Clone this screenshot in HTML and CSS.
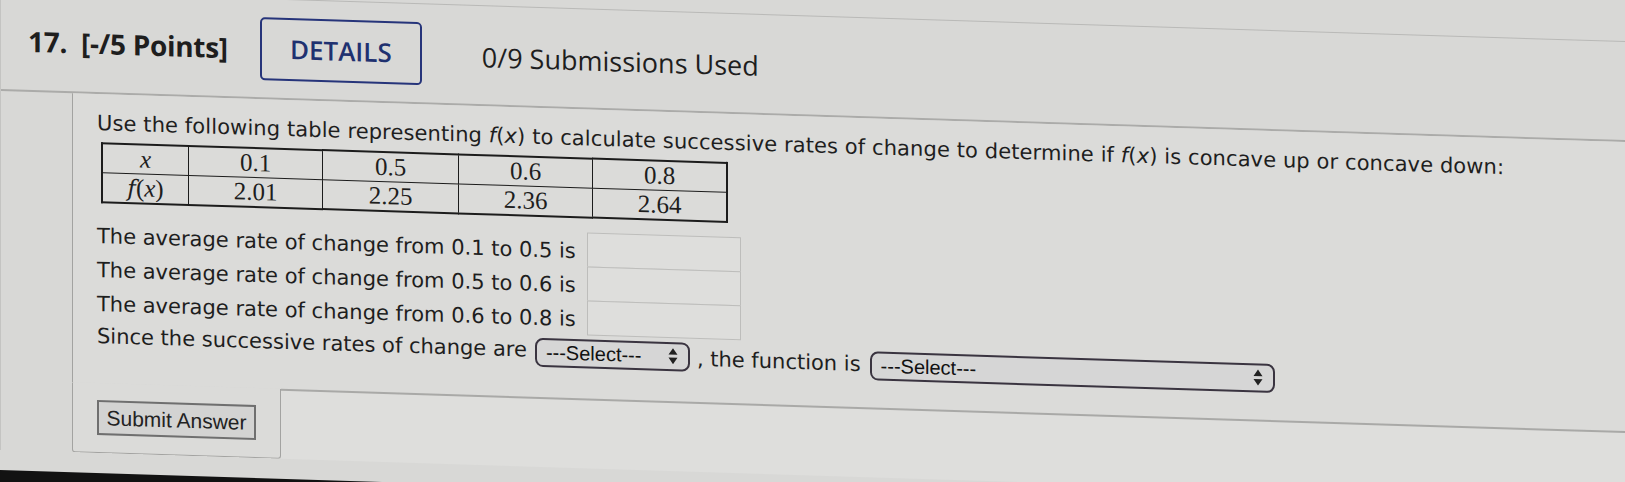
FILE: index.html
```html
<!DOCTYPE html>
<html lang="en">
<head>
<meta charset="utf-8">
<title>Question 17</title>
<link rel="stylesheet" href="styles.css">
</head>
<body>
<div class="frame">
<div class="page">
  <div class="question">
    <div class="header">
      <span class="qnum">17.&nbsp; [-/5 Points]</span>
      <span class="details">DETAILS</span>
      <span class="subs">0/9 Submissions Used</span>
    </div>
    <div class="content">
      <p class="intro">Use the following table representing <i class="fx">f</i>(<i class="fx">x</i>) to calculate successive rates of change to determine if <i class="fx">f</i>(<i class="fx">x</i>) is concave up or concave down:</p>
      <table class="data">
        <tr><td class="c0"><i>x</i></td><td>0.1</td><td class="w">0.5</td><td>0.6</td><td>0.8</td></tr>
        <tr><td class="c0"><i class="script">f</i>(<i>x</i>)</td><td>2.01</td><td class="w">2.25</td><td>2.36</td><td>2.64</td></tr>
      </table>
      <div class="answers">
        <div class="arow"><span class="label">The average rate of change from 0.1 to 0.5 is</span><span class="box"></span></div>
        <div class="arow"><span class="label">The average rate of change from 0.5 to 0.6 is</span><span class="box"></span></div>
        <div class="arow"><span class="label">The average rate of change from 0.6 to 0.8 is</span><span class="box"></span></div>
        <div class="srow">
          <span class="label">Since the successive rates of change are</span>
          <span class="select s1"><span class="stext">---Select---</span><svg class="arr" width="10" height="18" viewBox="0 0 10 18"><path d="M5 1 L9.5 7.5 L0.5 7.5 Z M5 17 L9.5 10.5 L0.5 10.5 Z" fill="#222"/></svg></span>
          <span class="label comma">, the function is</span>
          <span class="select s2"><span class="stext">---Select---</span><svg class="arr" width="10" height="18" viewBox="0 0 10 18"><path d="M5 1 L9.5 7.5 L0.5 7.5 Z M5 17 L9.5 10.5 L0.5 10.5 Z" fill="#222"/></svg></span>
        </div>
      </div>
    </div>
    <div class="footer">
      <div class="submit-box"><span class="submit">Submit Answer</span></div>
      <div class="filler"></div>
    </div>
  </div>
  <div class="bezel"></div>
</div>
</div>
</body>
</html>
```

FILE: styles.css
```css
html, body {
  margin: 0;
  padding: 0;
  overflow: hidden;
}
body {
  background: #d8d8d6;
  color: #1e1e1e;
}
.frame {
  width: 1625px;
  height: 482px;
  overflow: hidden;
}
.page {
  transform: skewY(1.8deg);
  transform-origin: 0 0;
  width: 1625px;
}
.question {
  margin-top: -10px;
  border-top: 1px solid #b9b9b7;
  border-left: 1px solid #c4c4c2;
}
.header {
  height: 98px;
  display: flex;
  align-items: center;
  padding-left: 27px;
  border-bottom: 2px solid #ababa9;
  font-family: "Open Sans", sans-serif;
}
.qnum {
  font-weight: 700;
  font-size: 28px;
  letter-spacing: -0.3px;
}
.details {
  margin-left: 32px;
  width: 158px;
  height: 59px;
  border: 2px solid #26347a;
  border-radius: 5px;
  display: flex;
  align-items: center;
  justify-content: center;
  color: #1f3170;
  font-size: 26px;
  font-weight: 600;
}
.subs {
  margin-left: 60px;
  font-size: 27px;
  margin-top: 2px;
}
.content {
  margin-left: 71px;
  border-left: 1px solid #a3a3a1;
  background: #dbdbd9;
  padding: 16px 0 31px 24px;
  font-family: "DejaVu Sans", Verdana, sans-serif;
  font-size: 21px;
}
.intro {
  margin: 0;
  line-height: 26px;
  letter-spacing: 0.1px;
  white-space: nowrap;
}
.fx {
  font-style: italic;
}
.data {
  margin: 6px 0 0 4px;
  border-collapse: collapse;
  border: 2px solid #1c1c1c;
  font-family: "Liberation Serif", "Times New Roman", serif;
  font-size: 25px;
}
.data td {
  border: 1.5px solid #1c1c1c;
  width: 133px;
  height: 28px;
  padding: 0;
  text-align: center;
  line-height: 28px;
}
.data td.c0 {
  width: 85px;
}
.data td.w {
  width: 135px;
}
.script {
  font-family: "DejaVu Serif", serif;
  font-style: italic;
  font-size: 23px;
}
.answers {
  margin-top: 15px;
}
.arow {
  display: flex;
  align-items: center;
  height: 34px;
}
.arow .label {
  width: 490px;
  white-space: nowrap;
  margin-top: 2px;
}
.box {
  width: 152px;
  height: 33px;
  border: 1px solid #bdbdbb;
  background: #dededc;
  margin-top: -1px;
}
.srow {
  display: flex;
  align-items: center;
  height: 32px;
  white-space: nowrap;
}
.select {
  display: flex;
  align-items: center;
  justify-content: space-between;
  height: 25px;
  border: 2px solid #3a3440;
  border-radius: 8px;
  background: #d6d6d6;
  font-family: "Liberation Sans", Arial, sans-serif;
  font-size: 20px;
  color: #111;
  padding: 0 10px 0 9px;
  box-sizing: content-box;
}
.s1 {
  width: 132px;
  margin-left: 8px;
  margin-top: 4px;
}
.s2 {
  width: 382px;
  margin-left: 9px;
  margin-top: 10px;
}
.comma {
  margin-left: 7px;
  margin-top: 8px;
}
.arr {
  display: block;
}
.footer {
  display: flex;
  margin-left: 71px;
}
.submit-box {
  width: 183px;
  height: 52px;
  padding: 17px 0 0 24px;
  border-left: 1px solid #a3a3a1;
  border-right: 1px solid #a3a3a1;
  border-bottom: 1px solid #a3a3a1;
  background: #dbdbd9;
  border-radius: 0 0 3px 3px;
}
.submit {
  display: flex;
  align-items: center;
  justify-content: center;
  width: 155px;
  height: 31px;
  background: #d3d3d2;
  border: 2px solid #6f6f6f;
  font-family: "Liberation Sans", Arial, sans-serif;
  font-size: 21px;
  color: #222;
}
.filler {
  flex: 1;
  border-top: 2px solid #a9a9a7;
  background: #dededc;
}
.bezel {
  height: 40px;
  margin-top: 20px;
  background: #121212;
}
```
